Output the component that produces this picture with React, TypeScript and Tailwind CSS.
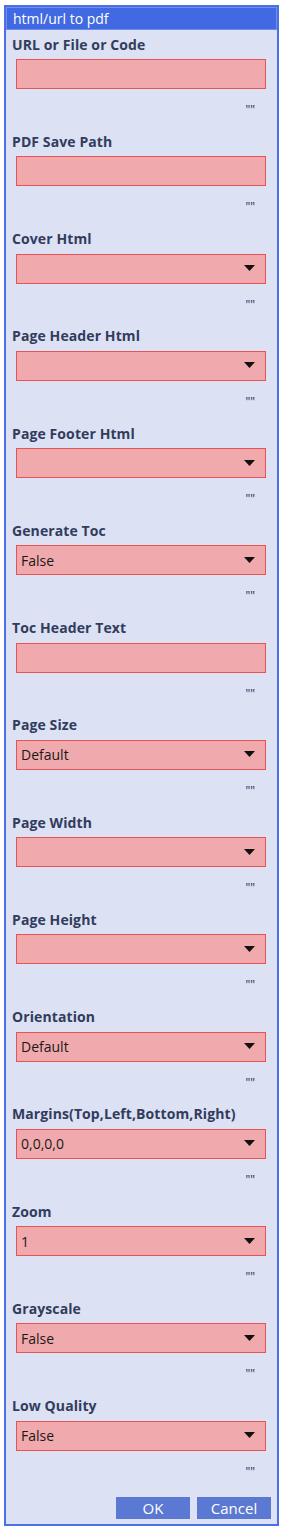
import React from "react";

interface Field {
  label: string;
  value?: string;
  select?: boolean;
}

const fields: Field[] = [
  { label: "URL or File or Code" },
  { label: "PDF Save Path" },
  { label: "Cover Html", select: true },
  { label: "Page Header Html", select: true },
  { label: "Page Footer Html", select: true },
  { label: "Generate Toc", value: "False", select: true },
  { label: "Toc Header Text" },
  { label: "Page Size", value: "Default", select: true },
  { label: "Page Width", select: true },
  { label: "Page Height", select: true },
  { label: "Orientation", value: "Default", select: true },
  { label: "Margins(Top,Left,Bottom,Right)", value: "0,0,0,0", select: true },
  { label: "Zoom", value: "1", select: true },
  { label: "Grayscale", value: "False", select: true },
  { label: "Low Quality", value: "False", select: true },
];

const font = { fontFamily: '"Open Sans", "Noto Sans", sans-serif' };

const App: React.FC = () => {
  return (
    <div className="w-[283px] h-[1527px] bg-white pt-[5px] pl-[4px]" style={font}>
      <div className="w-[275px] h-[1521px] border-2 border-[#4a6fe6] bg-[#dce1f4] flex flex-col">
        <div className="h-[23px] bg-[#4169e1] border border-[#6d8ef0] flex items-center pl-[6px]">
          <span className="text-white text-[14px] leading-none">html/url to pdf</span>
        </div>

        <div className="flex flex-col pt-[4px]">
          {fields.map((f) => (
            <div key={f.label} className="h-[97.25px] flex flex-col pl-[6px] pr-[11px]">
              <div className="h-[20px] flex items-center text-[14px] font-bold text-[#323c5c] tracking-[0.1px]">
                {f.label}
              </div>
              <div className="mt-[5px] ml-[4px] h-[30px] bg-[#f0a9ac] border border-[#e85252] flex items-center justify-between pl-[4px] pr-[10px]">
                <span className="text-[14px] text-[#1a1a1a]">{f.value ?? ""}</span>
                {f.select && (
                  <svg width="11" height="7" viewBox="0 0 11 7">
                    <polygon points="0,0 11,0 5.5,6" fill="#111" />
                  </svg>
                )}
              </div>
              <div className="h-[20px] mt-[15px] flex items-start justify-end pr-[11px]">
                <span className="text-[12px] text-[#2a2a5a] leading-none">""</span>
              </div>
            </div>
          ))}
        </div>

        <div className="flex justify-end gap-[7px] pr-[6px] mt-auto mb-[5px]">
          <button className="w-[74px] h-[22px] bg-[#5b78d2] text-white text-[15px] leading-none">OK</button>
          <button className="w-[74px] h-[22px] bg-[#5b78d2] text-white text-[15px] leading-none">Cancel</button>
        </div>
      </div>
    </div>
  );
};

export default App;
